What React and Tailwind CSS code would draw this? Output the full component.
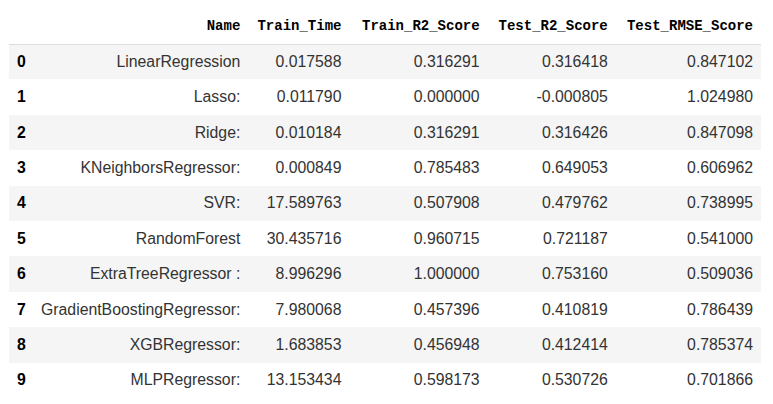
import React from "react";

const rows = [
  ["LinearRegression", "0.017588", "0.316291", "0.316418", "0.847102"],
  ["Lasso:", "0.011790", "0.000000", "-0.000805", "1.024980"],
  ["Ridge:", "0.010184", "0.316291", "0.316426", "0.847098"],
  ["KNeighborsRegressor:", "0.000849", "0.785483", "0.649053", "0.606962"],
  ["SVR:", "17.589763", "0.507908", "0.479762", "0.738995"],
  ["RandomForest", "30.435716", "0.960715", "0.721187", "0.541000"],
  ["ExtraTreeRegressor :", "8.996296", "1.000000", "0.753160", "0.509036"],
  ["GradientBoostingRegressor:", "7.980068", "0.457396", "0.410819", "0.786439"],
  ["XGBRegressor:", "1.683853", "0.456948", "0.412414", "0.785374"],
  ["MLPRegressor:", "13.153434", "0.598173", "0.530726", "0.701866"],
];

const headers = ["Name", "Train_Time", "Train_R2_Score", "Test_R2_Score", "Test_RMSE_Score"];
const widths = ["w-[215px]", "w-[101px]", "w-[138px]", "w-[128px]", "w-[145px]"];

const App = () => {
  return (
    <div className="w-[773px] h-[404px] bg-white pt-[9px] pl-[9px]">
      <table className="border-collapse w-[752px] table-fixed">
        <thead>
          <tr className="h-[35px] border-b border-[#dcdcdc]">
            <th className="w-[24px]"></th>
            {headers.map((h, i) => (
              <th
                key={h}
                className={`${widths[i]} px-2 text-right text-[14px] font-bold text-black font-['Liberation_Mono',monospace]`}
              >
                {h}
              </th>
            ))}
          </tr>
        </thead>
        <tbody className="font-['Liberation_Sans',Arial,sans-serif] text-[15.8px]">
          {rows.map((r, i) => (
            <tr key={i} className={`h-[35.4px] ${i % 2 === 0 ? "bg-[#f5f5f5]" : "bg-white"}`}>
              <td className="pl-2 text-left font-bold text-black">{i}</td>
              {r.map((c, j) => (
                <td key={j} className="px-2 text-right text-[#333] whitespace-nowrap">
                  {c}
                </td>
              ))}
            </tr>
          ))}
        </tbody>
      </table>
    </div>
  );
};

export default App;
